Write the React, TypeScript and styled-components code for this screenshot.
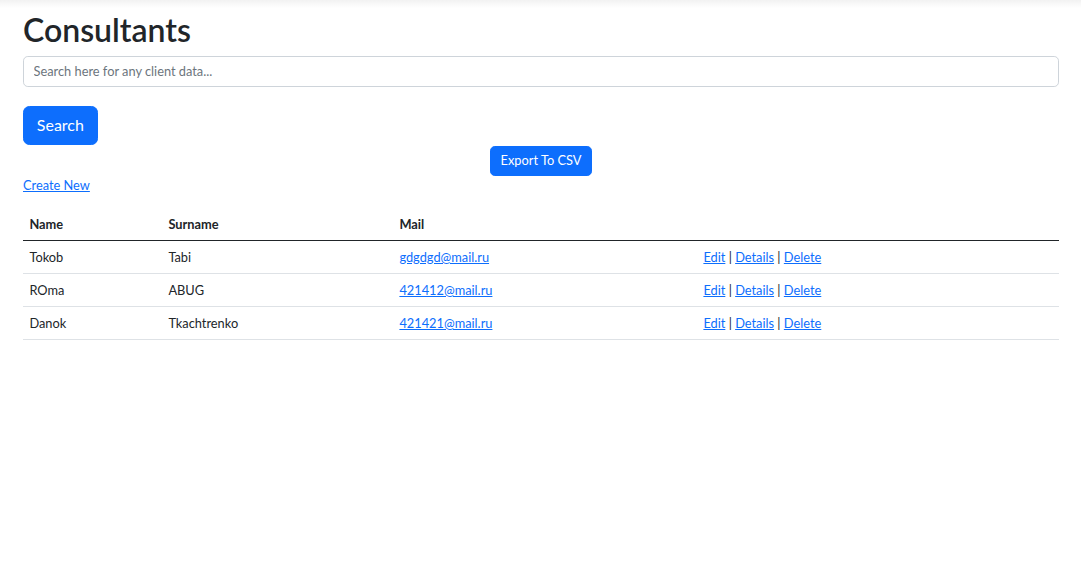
import React from "react";
import styled, { createGlobalStyle } from "styled-components";

const GlobalStyle = createGlobalStyle`
  html, body {
    margin: 0;
    padding: 0;
    background: #fff;
  }
  body {
    font-family: Lato, "Noto Sans", sans-serif;
    font-size: 12.8px;
    line-height: 1.5;
    color: #212529;
  }
  * {
    box-sizing: border-box;
  }
`;

const TopShade = styled.div`
  height: 8px;
  background: linear-gradient(to bottom, #f2f2f2, #ffffff);
`;

const Page = styled.main`
  padding: 0 22px 0 23px;
`;

const Title = styled.h1`
  margin: 3px 0 6.4px 0;
  font-size: 32px;
  font-weight: 600;
  line-height: 1.2;
`;

const SearchForm = styled.form`
  display: flex;
  flex-direction: column;
  align-items: flex-start;
  gap: 19px;
`;

const SearchInput = styled.input`
  width: 100%;
  height: 31px;
  padding: 4.8px 9.6px;
  font-family: inherit;
  font-size: 12.8px;
  color: #212529;
  border: 1px solid #ced4da;
  border-radius: 4.8px;
  outline: none;
  &::placeholder {
    color: #6c757d;
  }
`;

const Button = styled.button<{ $large?: boolean }>`
  font-family: inherit;
  color: #fff;
  background-color: #0d6efd;
  border: 1px solid #0d6efd;
  cursor: pointer;
  font-size: ${(p) => (p.$large ? "16px" : "12.8px")};
  line-height: 1.5;
  padding: ${(p) => (p.$large ? "6.4px 12.8px" : "4.8px 9.6px")};
  border-radius: ${(p) => (p.$large ? "6.4px" : "4.8px")};
`;

const ExportRow = styled.div`
  display: flex;
  justify-content: center;
  margin-top: 1px;
`;

const LinkPara = styled.p`
  margin: 0 0 12.8px 0;
`;

const Link = styled.a`
  color: #0d6efd;
  text-decoration: underline;
`;

const Table = styled.table`
  width: 100%;
  border-collapse: collapse;
  table-layout: fixed;
  th,
  td {
    padding: 6.4px 6.4px;
    text-align: left;
    vertical-align: top;
    border-bottom: 1px solid #dee2e6;
  }
  th {
    font-weight: 700;
    border-bottom: 1.6px solid #212529;
  }
`;

const Sep = styled.span`
  color: #212529;
`;

type Consultant = { name: string; surname: string; mail: string };

const consultants: Consultant[] = [
  { name: "Tokob", surname: "Tabi", mail: "gdgdgd@mail.ru" },
  { name: "ROma", surname: "ABUG", mail: "421412@mail.ru" },
  { name: "Danok", surname: "Tkachtrenko", mail: "421421@mail.ru" },
];

function App() {
  return (
    <>
      <GlobalStyle />
      <TopShade />
      <Page>
        <Title>Consultants</Title>
        <SearchForm onSubmit={(e) => e.preventDefault()}>
          <SearchInput placeholder="Search here for any client data..." />
          <Button $large type="submit">
            Search
          </Button>
        </SearchForm>
        <ExportRow>
          <Button type="button">Export To CSV</Button>
        </ExportRow>
        <LinkPara>
          <Link href="#">Create New</Link>
        </LinkPara>
        <Table>
          <colgroup>
            <col style={{ width: 139 }} />
            <col style={{ width: 231 }} />
            <col style={{ width: 304 }} />
            <col />
          </colgroup>
          <thead>
            <tr>
              <th>Name</th>
              <th>Surname</th>
              <th>Mail</th>
              <th></th>
            </tr>
          </thead>
          <tbody>
            {consultants.map((c) => (
              <tr key={c.mail}>
                <td>{c.name}</td>
                <td>{c.surname}</td>
                <td>
                  <Link href="#">{c.mail}</Link>
                </td>
                <td>
                  <Link href="#">Edit</Link> <Sep>|</Sep>{" "}
                  <Link href="#">Details</Link> <Sep>|</Sep>{" "}
                  <Link href="#">Delete</Link>
                </td>
              </tr>
            ))}
          </tbody>
        </Table>
      </Page>
    </>
  );
}

export default App;
